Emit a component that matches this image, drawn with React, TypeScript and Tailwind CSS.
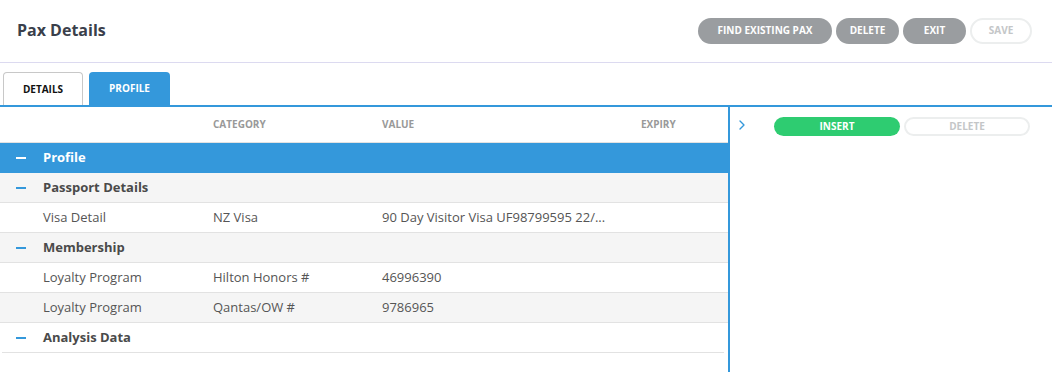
import { ChevronRight } from "lucide-react";

type Row =
  | { kind: "group"; label: string; top?: boolean }
  | { kind: "item"; name: string; category: string; value: string; expiry?: string };

const rows: Row[] = [
  { kind: "group", label: "Profile", top: true },
  { kind: "group", label: "Passport Details" },
  { kind: "item", name: "Visa Detail", category: "NZ Visa", value: "90 Day Visitor Visa UF98799595 22/..." },
  { kind: "group", label: "Membership" },
  { kind: "item", name: "Loyalty Program", category: "Hilton Honors #", value: "46996390" },
  { kind: "item", name: "Loyalty Program", category: "Qantas/OW #", value: "9786965" },
  { kind: "group", label: "Analysis Data" },
];

function Minus({ white }: { white?: boolean }) {
  return (
    <span className="w-[43px] pl-[16px] flex items-center">
      <span className={`block w-[10px] h-[2px] ${white ? "bg-white" : "bg-[#3498db]"}`} />
    </span>
  );
}

export default function App() {
  // striping restarts in every group
  let itemIndex = 0;
  return (
    <div className="w-[1052px] h-[372px] bg-white overflow-hidden font-['Open_Sans',sans-serif] text-[#555]">
      {/* header */}
      <div className="h-[63px] border-b border-[#dcdaf0] flex items-center justify-between pl-[17px] pr-[20px]">
        <h1 className="text-[16px] font-bold text-[#3a3f4b] -mt-[2px]">Pax Details</h1>
        <div className="flex items-center gap-[4px] -mt-[1px]">
          <button className="h-[26px] w-[134px] rounded-full bg-[#9a9da0] text-white text-[10px] font-bold">FIND EXISTING PAX</button>
          <button className="h-[26px] w-[63px] rounded-full bg-[#9a9da0] text-white text-[10px] font-bold">DELETE</button>
          <button className="h-[26px] w-[63px] rounded-full bg-[#9a9da0] text-white text-[10px] font-bold">EXIT</button>
          <button className="h-[26px] w-[62px] rounded-full border-2 border-[#eceeee] text-[#c4c6c8] text-[10px] font-bold">SAVE</button>
        </div>
      </div>

      {/* tabs */}
      <div className="flex items-end gap-[6px] pl-[3px] pt-[9px] border-b-2 border-[#3498db]">
        <div className="h-[33px] w-[80px] rounded-t-[4px] border border-b-0 border-[#c8c8c8] flex items-center justify-center text-[10px] font-bold text-[#111]">
          DETAILS
        </div>
        <div className="h-[33px] w-[81px] rounded-t-[4px] bg-[#3498db] flex items-center justify-center text-[10px] font-bold text-white">
          PROFILE
        </div>
      </div>

      <div className="flex">
        {/* grid */}
        <div className="w-[730px] border-r-2 border-[#3498db] h-[266px]">
          <div className="h-[36px] flex items-center border-b border-[#e2e2e2] text-[10px] font-bold text-[#999]">
            <span className="w-[213px]" />
            <span className="w-[169px]">CATEGORY</span>
            <span className="w-[259px]">VALUE</span>
            <span>EXPIRY</span>
          </div>
          {rows.map((r, i) => {
            if (r.kind === "group") {
              itemIndex = 0;
              if (r.top) {
                return (
                  <div key={i} className="h-[30px] flex items-center bg-[#3498db] text-white text-[13px] font-bold">
                    <Minus white />
                    <span>{r.label}</span>
                  </div>
                );
              }
              const last = i === rows.length - 1;
              return (
                <div
                  key={i}
                  className={`h-[30px] flex items-center text-[13px] font-bold text-[#4a4a4a] border-b border-[#e2e2e2] ${
                    last ? "bg-white mr-[4px] ml-[2px]" : "bg-[#f5f5f5]"
                  }`}
                >
                  {last ? <span className="w-[41px] pl-[14px] flex items-center"><span className="block w-[10px] h-[2px] bg-[#3498db]" /></span> : <Minus />}
                  <span>{r.label}</span>
                </div>
              );
            }
            const odd = itemIndex++ % 2 === 1;
            return (
              <div
                key={i}
                className={`h-[30px] flex items-center text-[13px] border-b border-[#e2e2e2] ${odd ? "bg-[#f5f5f5]" : "bg-white"}`}
              >
                <span className="w-[43px]" />
                <span className="w-[170px]">{r.name}</span>
                <span className="w-[169px]">{r.category}</span>
                <span className="w-[259px]">{r.value}</span>
                <span>{r.expiry ?? ""}</span>
              </div>
            );
          })}
        </div>

        {/* side panel */}
        <div className="flex-1 flex items-start pt-[10px] pl-[4px]">
          <ChevronRight className="w-[16px] h-[16px] text-[#3498db]" strokeWidth={2} />
          <div className="flex gap-[4px] ml-[24px]">
            <button className="h-[19px] w-[126px] rounded-full bg-[#2ecc71] text-white text-[10px] font-bold">INSERT</button>
            <button className="h-[19px] w-[126px] rounded-full border-2 border-[#eceeee] text-[#c4c6c8] text-[10px] font-bold">DELETE</button>
          </div>
        </div>
      </div>
    </div>
  );
}
